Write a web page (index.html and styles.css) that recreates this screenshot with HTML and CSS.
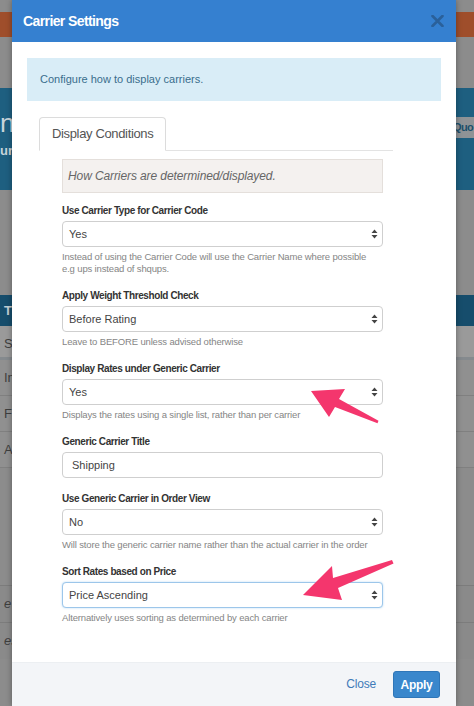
FILE: index.html
```html
<!DOCTYPE html>
<html lang="en">
<head>
  <meta charset="UTF-8" />
  <meta name="viewport" content="width=device-width, initial-scale=1.0"/>
  <title>Carrier Settings</title>
  <link rel="stylesheet" href="styles.css">
</head>
<body>
  <!-- pagina de fondo (oscurecida por el modal) -->
  <div class="page">
    <div class="page-gap h12"></div>
    <div class="page-navbar"></div>
    <div class="page-gap h51"></div>
    <div class="page-hero">
      <span class="hero-title">n</span>
      <span class="hero-sub">ur</span>
      <span class="hero-quote">Quo</span>
    </div>
    <div class="page-gap h105"></div>
    <div class="page-thead"><span>T</span></div>
    <div class="page-row first"><span>S</span></div>
    <div class="page-row"><span>In</span></div>
    <div class="page-row"><span>F</span></div>
    <div class="page-row"><span>A</span></div>
    <div class="page-gap h117"></div>
    <div class="page-row lower"><span><i>e</i></span></div>
    <div class="page-row lower"><span><i>es</i></span></div>
  </div>

  <div class="modal">
    <div class="modal-header">
      <h4 class="modal-title">Carrier Settings</h4>
      <button class="close-modal" aria-label="Close">
        <svg width="13" height="12" viewBox="0 0 13 12">
          <path d="M1.5 1 L11.5 11 M11.5 1 L1.5 11" stroke="currentColor" stroke-width="2.6" stroke-linecap="round"/>
        </svg>
      </button>
    </div>

    <div class="modal-body">
      <div class="alert-info">Configure how to display carriers.</div>

      <div class="tabs">
        <ul class="nav-tabs">
          <li class="tab active">Display Conditions</li>
        </ul>

        <div class="tab-content">
          <div class="well">How Carriers are determined/displayed.</div>

          <div class="form-group">
            <label class="field-label">Use Carrier Type for Carrier Code</label>
            <div class="select-box"><span>Yes</span><svg class="updown" width="7" height="10" viewBox="0 0 7 10"><path d="M3.5 0.5 L6.5 4 L0.5 4 Z M3.5 9.5 L6.5 6 L0.5 6 Z" fill="#444"/></svg></div>
            <p class="help">Instead of using the Carrier Code will use the Carrier Name where possible<br>e.g ups instead of shqups.</p>
          </div>

          <div class="form-group">
            <label class="field-label">Apply Weight Threshold Check</label>
            <div class="select-box"><span>Before Rating</span><svg class="updown" width="7" height="10" viewBox="0 0 7 10"><path d="M3.5 0.5 L6.5 4 L0.5 4 Z M3.5 9.5 L6.5 6 L0.5 6 Z" fill="#444"/></svg></div>
            <p class="help">Leave to BEFORE unless advised otherwise</p>
          </div>

          <div class="form-group">
            <label class="field-label">Display Rates under Generic Carrier</label>
            <div class="select-box"><span>Yes</span><svg class="updown" width="7" height="10" viewBox="0 0 7 10"><path d="M3.5 0.5 L6.5 4 L0.5 4 Z M3.5 9.5 L6.5 6 L0.5 6 Z" fill="#444"/></svg></div>
            <p class="help">Displays the rates using a single list, rather than per carrier</p>
          </div>

          <div class="form-group">
            <label class="field-label">Generic Carrier Title</label>
            <div class="text-box">Shipping</div>
          </div>

          <div class="form-group">
            <label class="field-label">Use Generic Carrier in Order View</label>
            <div class="select-box"><span>No</span><svg class="updown" width="7" height="10" viewBox="0 0 7 10"><path d="M3.5 0.5 L6.5 4 L0.5 4 Z M3.5 9.5 L6.5 6 L0.5 6 Z" fill="#444"/></svg></div>
            <p class="help">Will store the generic carrier name rather than the actual carrier in the order</p>
          </div>

          <div class="form-group last">
            <label class="field-label">Sort Rates based on Price</label>
            <div class="select-box focus"><span>Price Ascending</span><svg class="updown" width="7" height="10" viewBox="0 0 7 10"><path d="M3.5 0.5 L6.5 4 L0.5 4 Z M3.5 9.5 L6.5 6 L0.5 6 Z" fill="#444"/></svg></div>
            <p class="help">Alternatively uses sorting as determined by each carrier</p>
          </div>
        </div>
      </div>
    </div>

    <div class="modal-footer">
      <a class="btn-link">Close</a>
      <button class="btn-primary">Apply</button>
    </div>
  </div>

  <!-- flechas de anotacion -->
  <svg class="annotations" width="474" height="706" viewBox="0 0 474 706">
    <polygon points="311,391 345,389 339,399 378.5,420.8 377.5,423.2 335,407 329,417" fill="#f4366d"/>
    <polygon points="303,595 332,566 333,578 392,560 393.5,563.5 338,588 342,600" fill="#f4366d"/>
  </svg>
</body>
</html>
```

FILE: styles.css
```css
* {
  box-sizing: border-box;
}
html, body {
  margin: 0;
  padding: 0;
  height: 706px;
  overflow: hidden;
}
body {
  font-family: "Liberation Sans", Arial, sans-serif;
  background: #8c8c8c;
  position: relative;
}

/* Fondo */
.page {
  width: 100%;
}
.page-gap { background: #8c8c8c; }
.h12 { height: 12px; }
.h51 { height: 51px; }
.h105 { height: 105px; }
.h117 { height: 117px; }
.page-navbar {
  height: 25px;
  background: #9f4e2b;
}
.page-hero {
  height: 102px;
  background: #1e5f80;
  position: relative;
  color: #c9d4da;
}
.hero-title {
  position: absolute;
  left: 0;
  top: 20px;
  font-size: 26px;
}
.hero-sub {
  position: absolute;
  left: 0;
  top: 55px;
  font-size: 13px;
  font-weight: bold;
}
.hero-quote {
  position: absolute;
  left: 453px;
  right: 0;
  top: 29px;
  height: 21px;
  background: #8f9396;
  color: #1c4f6b;
  font-size: 11px;
  font-weight: bold;
  letter-spacing: -0.6px;
  line-height: 21px;
  white-space: nowrap;
}
.page-thead {
  height: 31px;
  background: #164d6c;
  color: #c2cdd3;
  font-size: 13px;
  font-weight: bold;
  line-height: 31px;
}
.page-row {
  height: 36px;
  background: #909090;
  border-bottom: 1px solid #808080;
  color: #3f3f3f;
  font-size: 13px;
  line-height: 36px;
}
.page-row.first {
  height: 34px;
  background: #9a9a9a;
  border-bottom: 3px solid #858a8e;
}
.page-row.lower {
  height: 37px;
  background: #8a8a8a;
  border-top: 1px solid #7c7c7c;
  border-bottom: none;
}
.page-thead span,
.page-row span {
  padding-left: 4px;
}

/* Modal */
.modal {
  position: absolute;
  top: 0;
  left: 12px;
  width: 444px;
  height: 706px;
  background: #fff;
  box-shadow: 0 0 6px rgba(0,0,0,0.35);
  display: flex;
  flex-direction: column;
}
.modal-header {
  flex-shrink: 0;
  height: 42px;
  background: #3580d0;
  display: flex;
  align-items: center;
  justify-content: space-between;
  padding: 0 12px 0 11px;
}
.modal-title {
  margin: 0;
  color: #fff;
  font-size: 14px;
  font-weight: bold;
  letter-spacing: -0.6px;
}
.close-modal {
  background: none;
  border: none;
  padding: 0;
  margin-top: -1px;
  color: #2a609a;
  display: flex;
}

.modal-body {
  flex-shrink: 0;
  padding: 16px 15px 15px;
}
.alert-info {
  height: 43px;
  background: #d9edf7;
  color: #3a6e8d;
  font-size: 11px;
  line-height: 43px;
  padding: 0 13px;
}

.tabs {
  margin: 16px 48px 0 12px;
}
.nav-tabs {
  list-style: none;
  margin: 0;
  padding: 0;
  display: flex;
  border-bottom: 1px solid #e3e3e3;
}
.tab {
  height: 34px;
  margin-bottom: -1px;
  padding: 0 12px;
  border: 1px solid #dcdcdc;
  border-bottom-color: #fff;
  border-radius: 4px 4px 0 0;
  background: #fff;
  color: #555;
  font-size: 13px;
  letter-spacing: -0.35px;
  line-height: 32px;
}

.tab-content {
  padding: 8px 10px 23px 23px;
}
.well {
  height: 34px;
  margin-bottom: 11px;
  padding: 0 5px;
  background: #f4f1ef;
  border: 1px solid #e4dfdb;
  color: #666;
  font-size: 12px;
  font-style: italic;
  letter-spacing: -0.1px;
  line-height: 32px;
}

.form-group {
  margin-bottom: 14px;
}
.form-group.last {
  margin-bottom: 0;
}
.field-label {
  display: block;
  margin-bottom: 3px;
  color: #333;
  font-size: 10px;
  font-weight: bold;
  letter-spacing: -0.4px;
  line-height: 14px;
}
.select-box,
.text-box {
  height: 26px;
  border: 1px solid #cfcfcf;
  border-radius: 4px;
  background: #fff;
  color: #444;
  font-size: 11px;
  display: flex;
  align-items: center;
  justify-content: space-between;
  padding: 0 4px 0 6px;
}
.text-box {
  padding-left: 9px;
}
.select-box.focus {
  border-color: #9cc6ea;
  box-shadow: 0 0 2px rgba(102,175,233,0.5);
}
.help {
  margin: 4px 0 0;
  color: #858585;
  font-size: 9.5px;
  letter-spacing: -0.15px;
  line-height: 12px;
}

.modal-footer {
  flex: 1;
  background: #f3f5f8;
  border-top: 1px solid #eceff2;
  display: flex;
  align-items: flex-start;
  justify-content: flex-end;
  gap: 17px;
  padding: 8px 16px 0 0;
}
.btn-link {
  color: #3f7bb8;
  font-size: 12px;
  letter-spacing: -0.2px;
  line-height: 27px;
}
.btn-primary {
  width: 47px;
  height: 27px;
  border: 1px solid #2f76b8;
  border-radius: 3px;
  background: #3a87cc;
  color: #fff;
  font-family: "Liberation Sans", Arial, sans-serif;
  font-size: 12px;
  font-weight: bold;
  letter-spacing: -0.3px;
  padding: 0;
}

.annotations {
  position: absolute;
  top: 0;
  left: 0;
  pointer-events: none;
}
```
